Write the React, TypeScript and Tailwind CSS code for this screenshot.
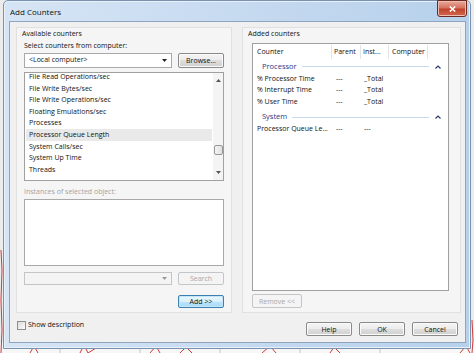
import React from "react"

const font = "font-['Open_Sans',sans-serif]"

const counters = [
  "File Read Operations/sec",
  "File Write Bytes/sec",
  "File Write Operations/sec",
  "Floating Emulations/sec",
  "Processes",
  "Processor Queue Length",
  "System Calls/sec",
  "System Up Time",
  "Threads",
]

const groups = [
  {
    name: "Processor",
    rows: [
      ["% Processor Time", "---", "_Total"],
      ["% Interrupt Time", "---", "_Total"],
      ["% User Time", "---", "_Total"],
    ],
  },
  {
    name: "System",
    rows: [["Processor Queue Le...", "---", "---"]],
  },
]

function Btn({
  children,
  className = "",
  disabled,
  primary,
}: {
  children: React.ReactNode
  className?: string
  disabled?: boolean
  primary?: boolean
}) {
  const look = disabled
    ? "border-[#c2c6c9] bg-[#f4f4f4] text-[#a8a8a8]"
    : primary
      ? "border-[#3c7fb1] bg-[linear-gradient(#eaf6fd,#d9f0fc_50%,#bee6fd_50%,#a7d9f5)] text-[#111] shadow-[inset_0_0_0_1px_#c5e6f8]"
      : "border-[#8a8a8a] bg-[linear-gradient(#f4f4f4,#ececec_50%,#dedede_50%,#d0d0d0)] text-[#111] shadow-[inset_0_0_0_1px_#fbfbfb]"
  return (
    <div
      className={`flex items-center justify-center rounded-[2px] border text-[7px] leading-none ${look} ${className}`}
    >
      {children}
    </div>
  )
}

function Arrow({ color = "#222" }: { color?: string }) {
  return (
    <svg width="5" height="3" viewBox="0 0 5 3">
      <polygon points="0,0 5,0 2.5,3" fill={color} />
    </svg>
  )
}

function Chevron() {
  return (
    <svg width="6" height="4" viewBox="0 0 6 4">
      <polyline points="0.5,3.5 3,1 5.5,3.5" fill="none" stroke="#2a3a6a" strokeWidth="1.2" />
    </svg>
  )
}

function Backdrop() {
  return (
    <svg className="absolute inset-0" width="474" height="353" viewBox="0 0 474 353">
      <rect width="474" height="353" fill="#ececec" />
      <rect x="0" y="343" width="474" height="10" fill="#f7f7f7" />
      <g stroke="#c8c8c8" strokeWidth="1">
        <line x1="60" y1="343" x2="60" y2="353" />
        <line x1="140" y1="343" x2="140" y2="353" />
        <line x1="220" y1="343" x2="220" y2="353" />
        <line x1="300" y1="343" x2="300" y2="353" />
        <line x1="380" y1="343" x2="380" y2="353" />
      </g>
      <g stroke="#d23a3a" strokeWidth="1" fill="none">
        <polyline points="1,250 2,270 1,300 2,330 1,353" />
        <polyline points="30,353 34,346 38,353" />
        <polyline points="80,353 84,345 88,353 96,348" />
        <polyline points="150,353 156,346 160,353" />
        <polyline points="180,353 186,347 192,353" />
        <polyline points="262,353 270,346 276,353" />
        <polyline points="330,353 334,347 340,353" />
        <polyline points="460,353 466,346 470,353" />
        <polyline points="472,320 473,340 472,353" />
      </g>
    </svg>
  )
}

export default function App() {
  return (
    <div className={`relative h-[353px] w-[474px] overflow-hidden ${font}`}>
      <Backdrop />

      {/* window */}
      <div className="absolute left-[3px] top-0 flex h-[349px] w-[468px] flex-col rounded-t-[5px] border border-[#7892b0] bg-[linear-gradient(90deg,#d6e5f5,#c3d8ef_60%,#b7d1ec)] shadow-[inset_0_0_0_1px_#e8f1fa]">
        {/* title bar */}
        <div className="relative flex h-[20px] items-center pl-[6px] pt-[2px]">
          <span className="text-[8px] text-[#111]">Add Counters</span>
          <div className="absolute right-[3px] top-[-1px] flex h-[17px] w-[30px] items-center justify-center rounded-b-[3px] border border-[#6d2a22] bg-[linear-gradient(#e9a99b,#d7735f_45%,#c0432c_55%,#d2684e)] shadow-[inset_0_0_0_1px_#eebdb2]">
            <svg width="7" height="6" viewBox="0 0 7 6">
              <path d="M0.8 0.5 L6.2 5.5 M6.2 0.5 L0.8 5.5" stroke="#fff" strokeWidth="1.6" />
            </svg>
          </div>
        </div>

        {/* client area */}
        <div className="mb-[5px] ml-[5px] mr-[4px] flex flex-1 flex-col border border-[#8fa4be] bg-[#f0f0f0] text-[#111]">
          <div className="flex gap-[10px] pl-[6px] pt-[5px]">
            {/* left group */}
            <div className="flex h-[286px] w-[216px] flex-col border border-[#e0e0e0] bg-[#f5f5f5] pl-[7px]">
              <div className="ml-[-2px] mt-[1px] h-[10px] text-[7px] leading-[10px]">Available counters</div>
              <div className="mt-[2px] h-[10px] text-[7px] leading-[10px]">Select counters from computer:</div>
              <div className="mt-[2px] flex h-[15px] items-stretch">
                <div className="flex w-[148px] items-center justify-between border border-[#a9a9a9] bg-white pl-[4px] pr-[4px] text-[7px]">
                  <span>&lt;Local computer&gt;</span>
                  <Arrow />
                </div>
                <Btn className="ml-[6px] w-[46px]">Browse...</Btn>
              </div>

              {/* counters list */}
              <div className="mt-[4px] flex h-[109px] w-[200px] overflow-hidden border border-[#a0a0a0] bg-white">
                <div className="mt-[-2px] flex flex-1 flex-col px-[1px]">
                  {counters.map((c) => (
                    <div
                      key={c}
                      className={`h-[11.6px] shrink-0 pl-[3px] text-[7px] leading-[11.6px] ${
                        c === "Processor Queue Length" ? "bg-[#e9e9e9]" : ""
                      }`}
                    >
                      {c}
                    </div>
                  ))}
                </div>
                <div className="flex w-[10px] flex-col items-center bg-[#f4f4f4] py-[6px]">
                  <div className="rotate-180">
                    <Arrow color="#555" />
                  </div>
                  <div className="mt-[63px] h-[10px] w-[9px] rounded-[2px] border border-[#979797] bg-[linear-gradient(90deg,#f4f4f4,#e0e0e0)]" />
                  <div className="mt-auto">
                    <Arrow color="#555" />
                  </div>
                </div>
              </div>

              <div className="mt-[6px] h-[10px] text-[7px] leading-[10px] text-[#a3a3a3]">
                Instances of selected object:
              </div>
              <div className="mt-[2px] h-[67px] w-[200px] border border-[#a9a9a9] bg-white" />

              <div className="mt-[6px] flex h-[13px] items-stretch">
                <div className="flex w-[148px] items-center justify-end border border-[#c5c5c5] bg-[#f4f4f4] pr-[4px]">
                  <Arrow color="#999" />
                </div>
                <Btn disabled className="ml-[6px] w-[46px]">
                  Search
                </Btn>
              </div>
              <div className="mt-[10px] flex h-[13px]">
                <Btn primary className="ml-[154px] w-[46px]">
                  Add &gt;&gt;
                </Btn>
              </div>
            </div>

            {/* right group */}
            <div className="flex h-[286px] w-[219px] flex-col border border-[#e0e0e0] bg-[#f5f5f5] pl-[9px]">
              <div className="ml-[-4px] mt-[1px] h-[10px] text-[7px] leading-[10px]">Added counters</div>
              <div className="mt-[4px] flex h-[248px] w-[197px] flex-col border border-[#a0a0a0] bg-white">
                <div className="flex h-[16px] items-center text-[7px]">
                  <div className="w-[78px] pl-[4px]">Counter</div>
                  <div className="h-[14px] w-px bg-[#e4e4e4]" />
                  <div className="w-[28px] pl-[2px]">Parent</div>
                  <div className="h-[14px] w-px bg-[#e4e4e4]" />
                  <div className="w-[27px] pl-[2px]">Inst...</div>
                  <div className="h-[14px] w-px bg-[#e4e4e4]" />
                  <div className="w-[38px] pl-[3px]">Computer</div>
                  <div className="h-[14px] w-px bg-[#e4e4e4]" />
                </div>
                <div className="flex flex-col">
                  {groups.map((g) => (
                    <div key={g.name} className="flex flex-col">
                      <div className="flex h-[13px] items-center pl-[9px] pr-[7px]">
                        <span className="text-[7.5px] text-[#1e3a8a]">{g.name}</span>
                        <div className="ml-[5px] h-px flex-1 bg-[#c9d9ee]" />
                        <div className="ml-[6px]">
                          <Chevron />
                        </div>
                      </div>
                      {g.rows.map((r) => (
                        <div key={r[0]} className="flex h-[11.5px] items-center text-[7px]">
                          <div className="w-[83px] pl-[4px]">{r[0]}</div>
                          <div className="w-[28px]">{r[1]}</div>
                          <div className="w-[30px]">{r[2]}</div>
                        </div>
                      ))}
                      <div className="h-[3px]" />
                    </div>
                  ))}
                </div>
              </div>
              <Btn disabled className="mt-[3px] h-[14px] w-[50px]">
                Remove &lt;&lt;
              </Btn>
            </div>
          </div>

          {/* bottom row */}
          <div className="flex items-start pl-[7px] pr-[7px] pt-[7px]">
            <div className="flex items-center">
              <div className="h-[9px] w-[9px] border border-[#8e8f8f] bg-[linear-gradient(135deg,#dcdcdc,#fbfbfb)]" />
              <span className="ml-[2px] text-[7px]">Show description</span>
            </div>
            <div className="ml-auto mt-[2px] flex gap-[7px]">
              <Btn className="h-[14px] w-[46px]">Help</Btn>
              <Btn className="h-[14px] w-[46px]">OK</Btn>
              <Btn className="h-[14px] w-[46px]">Cancel</Btn>
            </div>
          </div>
        </div>
      </div>
    </div>
  )
}
